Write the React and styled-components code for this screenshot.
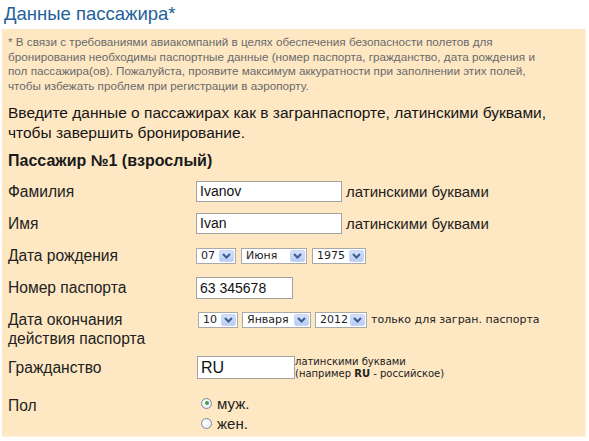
import React from 'react';
import styled, { createGlobalStyle } from 'styled-components';

const GlobalStyle = createGlobalStyle`
  html, body {
    margin: 0;
    padding: 0;
    background: #ffffff;
  }
  body {
    font-family: "Liberation Sans", Arial, sans-serif;
  }
`;

const Page = styled.div`
  width: 589px;
  padding: 0 3px 0 2px;
  box-sizing: border-box;
`;

const Title = styled.h1`
  margin: 0;
  padding: 2px 0 0 2px;
  height: 27px;
  font-size: 18.5px;
  line-height: 24px;
  font-weight: normal;
  color: #24619a;
`;

const Panel = styled.div`
  background: #fee8c4;
  border-right: 1px solid #fff2dd;
  border-bottom: 1px solid #fff2dd;
  padding: 6px;
  height: 408px;
  box-sizing: border-box;
`;

const Note = styled.p`
  margin: 0;
  font-size: 11.7px;
  line-height: 14.6px;
  color: #6a6a6a;
`;

const Lead = styled.p`
  margin: 10px 0 0;
  font-size: 15.5px;
  line-height: 20px;
  color: #151515;
`;

const PassengerTitle = styled.h2`
  margin: 8px 0 0;
  font-size: 16px;
  line-height: 20px;
  font-weight: bold;
  color: #1a1a1a;
`;

const Form = styled.div`
  margin-top: 5px;
`;

const Row = styled.div`
  display: grid;
  grid-template-columns: 188px 1fr;
  align-items: start;
  height: ${({ $h }) => $h || 32}px;
`;

const Label = styled.div`
  padding-top: 6px;
  font-size: 15.6px;
  line-height: 19px;
  color: #222222;
`;

const Field = styled.div`
  display: flex;
  align-items: center;
  gap: ${({ $gap }) => ($gap === undefined ? 4 : $gap)}px;
  height: 31px;
  padding-left: ${({ $indent }) => $indent || 0}px;
`;

const TextInput = styled.div`
  width: ${({ $w }) => $w}px;
  height: ${({ $hgt }) => $hgt || 21}px;
  box-sizing: border-box;
  border: 1px solid #a3a3a3;
  background: #ffffff;
  padding: 0 3px;
  font-size: ${({ $fs }) => $fs || 14}px;
  line-height: ${({ $hgt }) => ($hgt || 21) - 2}px;
  color: #111111;
`;

const Hint = styled.span`
  font-size: 15px;
  color: #222222;
`;

const SmallHint = styled.span`
  font-family: "DejaVu Sans", Verdana, sans-serif;
  font-size: ${({ $fs }) => $fs || 10}px;
  line-height: 12px;
  color: #222222;
  b {
    font-weight: bold;
  }
`;

const SelectRow = styled.div`
  display: flex;
  align-items: center;
  gap: ${({ $gap }) => $gap}px;
`;

const SelectBox = styled.div`
  width: ${({ $w }) => $w}px;
  height: 16px;
  box-sizing: border-box;
  border: 1px solid #a9a9a9;
  background: #ffffff;
  display: flex;
  align-items: center;
  justify-content: space-between;
  padding: 0 1px 0 4px;
  font-family: "DejaVu Sans", Verdana, sans-serif;
  font-size: 11px;
  line-height: 14px;
  color: #222222;
`;

const ArrowButton = styled.span`
  width: 15px;
  height: 12px;
  border-radius: 2px;
  background: linear-gradient(#d4e1fb, #b9cdf5);
  border: 1px solid #c6d6f6;
  box-sizing: border-box;
  display: flex;
  align-items: center;
  justify-content: center;
`;

const RadioGroup = styled.div`
  display: flex;
  flex-direction: column;
  padding: 3px 0 0 5px;
`;

const RadioItem = styled.label`
  display: flex;
  align-items: center;
  gap: 5px;
  height: 20px;
  font-size: 15px;
  color: #222222;
`;

const RadioCircle = styled.span`
  width: 11px;
  height: 11px;
  border-radius: 50%;
  border: 1px solid #7b8aa0;
  background: radial-gradient(circle at 40% 40%, #ffffff, #dfe3ea);
  box-sizing: border-box;
  display: flex;
  align-items: center;
  justify-content: center;
  &::after {
    content: '';
    width: 4px;
    height: 4px;
    border-radius: 50%;
    background: ${({ $checked }) => ($checked ? '#4f9a4f' : 'transparent')};
  }
`;

const Chevron = () => (
  <svg width="9" height="6" viewBox="0 0 9 6">
    <path d="M1 1 L4.5 4.5 L8 1" fill="none" stroke="#3d5a91" strokeWidth="2" />
  </svg>
);

const Select = ({ value, width }) => (
  <SelectBox $w={width}>
    <span>{value}</span>
    <ArrowButton>
      <Chevron />
    </ArrowButton>
  </SelectBox>
);

const Radio = ({ checked, children }) => (
  <RadioItem>
    <RadioCircle $checked={checked} />
    {children}
  </RadioItem>
);

export default function App() {
  return (
    <Page>
      <GlobalStyle />
      <Title>Данные пассажира*</Title>
      <Panel>
        <Note>
          * В связи с требованиями авиакомпаний в целях обеспечения безопасности полетов для
          <br />
          бронирования необходимы паспортные данные (номер паспорта, гражданство, дата рождения и
          <br />
          пол пассажира(ов). Пожалуйста, проявите максимум аккуратности при заполнении этих полей,
          <br />
          чтобы избежать проблем при регистрации в аэропорту.
        </Note>
        <Lead>
          Введите данные о пассажирах как в загранпаспорте, латинскими буквами,
          <br />
          чтобы завершить бронирование.
        </Lead>
        <PassengerTitle>Пассажир №1 (взрослый)</PassengerTitle>
        <Form>
          <Row>
            <Label>Фамилия</Label>
            <Field>
              <TextInput $w={146}>Ivanov</TextInput>
              <Hint>латинскими буквами</Hint>
            </Field>
          </Row>
          <Row>
            <Label>Имя</Label>
            <Field>
              <TextInput $w={146}>Ivan</TextInput>
              <Hint>латинскими буквами</Hint>
            </Field>
          </Row>
          <Row>
            <Label>Дата рождения</Label>
            <Field>
              <SelectRow $gap={5}>
                <Select value="07" width={40} />
                <Select value="Июня" width={66} />
                <Select value="1975" width={54} />
              </SelectRow>
            </Field>
          </Row>
          <Row>
            <Label>Номер паспорта</Label>
            <Field>
              <TextInput $w={97} $hgt={22}>63 345678</TextInput>
            </Field>
          </Row>
          <Row $h={48}>
            <Label>
              Дата окончания
              <br />
              действия паспорта
            </Label>
            <Field $indent={2}>
              <SelectRow $gap={4}>
                <Select value="10" width={40} />
                <Select value="Января" width={69} />
                <Select value="2012" width={52} />
              </SelectRow>
              <SmallHint $fs={11}>только для загран. паспорта</SmallHint>
            </Field>
          </Row>
          <Row $h={38}>
            <Label>Гражданство</Label>
            <Field $gap={0} $indent={1}>
              <TextInput $w={98} $hgt={23} $fs={16}>RU</TextInput>
              <SmallHint>
                латинскими буквами
                <br />
                (например <b>RU</b> - российское)
              </SmallHint>
            </Field>
          </Row>
          <Row $h={45}>
            <Label>Пол</Label>
            <RadioGroup>
              <Radio checked>муж.</Radio>
              <Radio>жен.</Radio>
            </RadioGroup>
          </Row>
        </Form>
      </Panel>
    </Page>
  );
}
